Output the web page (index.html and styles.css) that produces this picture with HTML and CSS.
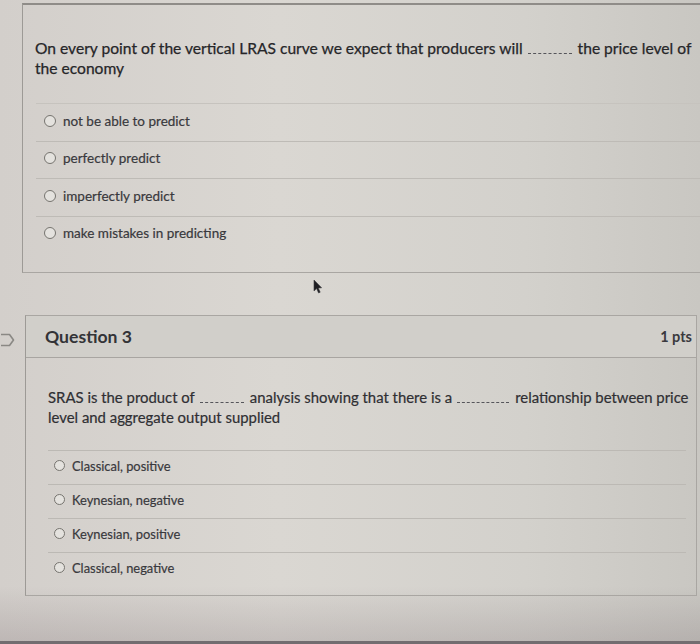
FILE: index.html
```html
<!DOCTYPE html>
<html>
<head>
<meta charset="utf-8">
<link rel="stylesheet" href="styles.css">
</head>
<body>
<div class="page">
  <section class="card card-first">
    <div class="q-text">On every point of the vertical LRAS curve we expect that producers will<span class="blank"></span>the price level of<br>the economy</div>
    <ul class="answers">
      <li class="answer"><span class="radio"></span>not be able to predict</li>
      <li class="answer"><span class="radio"></span>perfectly predict</li>
      <li class="answer"><span class="radio"></span>imperfectly predict</li>
      <li class="answer"><span class="radio"></span>make mistakes in predicting</li>
    </ul>
  </section>

  <section class="card card-second">
    <svg class="flag" width="14" height="14" viewBox="0 0 14 14"><path d="M-2 1.5 H8.5 L12.5 7 L8.5 12.5 H-2" fill="none" stroke="#8a8884" stroke-width="1.6" stroke-linejoin="round"/></svg>
    <header class="q-header">
      <span class="q-title">Question 3</span>
      <span class="q-pts">1 pts</span>
    </header>
    <div class="q-body">
      <div class="q-text2">SRAS is the product of<span class="blank"></span>analysis showing that there is a<span class="blank blank-long"></span>relationship between price<br>level and aggregate output supplied</div>
      <ul class="answers answers2">
        <li class="answer"><span class="radio"></span>Classical, positive</li>
        <li class="answer"><span class="radio"></span>Keynesian, negative</li>
        <li class="answer"><span class="radio"></span>Keynesian, positive</li>
        <li class="answer"><span class="radio"></span>Classical, negative</li>
      </ul>
    </div>
  </section>
  <div class="bottom-edge"></div>
  <svg class="cursor" width="10" height="16" viewBox="0 0 10 16"><path d="M1 1 L1 12 L3.6 9.6 L5.6 14 L7.2 13.2 L5.3 9 L8.6 8.8 Z" fill="#1e1e22" stroke="#3a3a3e" stroke-width="0.6"/></svg>
</div>
</body>
</html>
```

FILE: styles.css
```css
* { box-sizing: border-box; }
html, body { margin: 0; padding: 0; }
body {
  width: 700px;
  height: 644px;
  overflow: hidden;
  font-family: Lato, "Open Sans", sans-serif;
  color: #2f2f33;
  background:
    linear-gradient(180deg, rgba(0,0,0,0) 0%, rgba(0,0,0,0) 91%, rgba(70,50,60,0.16) 100%),
    linear-gradient(90deg, #d3cfcb 0%, #dad7d2 40%, #d3d1cc 75%, #c9c7c2 100%);
}
.page {
  position: relative;
  height: 644px;
  padding-top: 3px;
  display: flex;
  flex-direction: column;
}
.card {
  border-left: 1px solid #9d9a96;
  border-top: 1px solid #a9a6a2;
  border-bottom: 1px solid #a9a6a2;
}
.card-first {
  margin-left: 22px;
  width: 690px;
  height: 270px;
  border-top-color: #8f8c88;
  border-top-width: 2px;
}
.q-text {
  padding: 33px 0 0 12px;
  font-size: 15.6px;
  line-height: 20px;
  width: 690px;
  color: #262629;
  -webkit-text-stroke: 0.25px #262629;
}
.blank {
  display: inline-block;
  width: 44px;
  height: 1px;
  margin: 0 6px 0 5px;
  border-bottom: 1.5px dashed #55555a;
  vertical-align: 0;
}
.blank-long { width: 52px; }
.answers {
  list-style: none;
  margin: 25px 0 0 13px;
  padding: 0;
}
.answer {
  display: flex;
  align-items: center;
  gap: 7px;
  height: 37.5px;
  border-top: 1px solid #bebbb6;
  font-size: 13.5px;
  color: #39393d;
  padding-left: 8px;
  padding-bottom: 3px;
  -webkit-text-stroke: 0.2px #39393d;
}
.answer:first-child { border-top-color: #c6c3be; }
.radio {
  width: 12px;
  height: 12px;
  border: 1.5px solid #76746f;
  border-radius: 50%;
  flex: none;
  background: #e4e2de;
}
.card-second {
  position: relative;
  margin-top: 42px;
  margin-left: 25px;
  width: 672px;
  height: 281px;
  border-right: 1px solid #a9a6a2;
}
.flag {
  position: absolute;
  left: -25px;
  top: 17px;
}
.q-header {
  height: 42px;
  background: #d1cfca;
  border-bottom: 1px solid #a8a5a1;
  display: flex;
  align-items: center;
  justify-content: space-between;
  padding: 0 4px 0 19px;
}
.q-title { font-size: 17.6px; font-weight: 700; color: #333337; }
.q-pts { font-size: 14.5px; font-weight: 700; color: #3a3a3e; }
.q-body { padding: 29px 0 0 22px; }
.q-text2 {
  font-size: 14.9px;
  line-height: 20px;
  color: #2f2f33;
  width: 645px;
  -webkit-text-stroke: 0.2px #2f2f33;
}
.answers2 {
  margin: 23px 10px 0 0;
}
.answers2 .answer {
  height: 34px;
  font-size: 12.9px;
  padding-left: 6px;
  padding-bottom: 4px;
  border-top-color: #bcb9b4;
}
.answers2 .radio { width: 11px; height: 11px; }
.bottom-edge {
  margin-top: auto;
  height: 3px;
  background: #726d70;
}
.cursor {
  position: absolute;
  left: 313px;
  top: 279px;
}
```
